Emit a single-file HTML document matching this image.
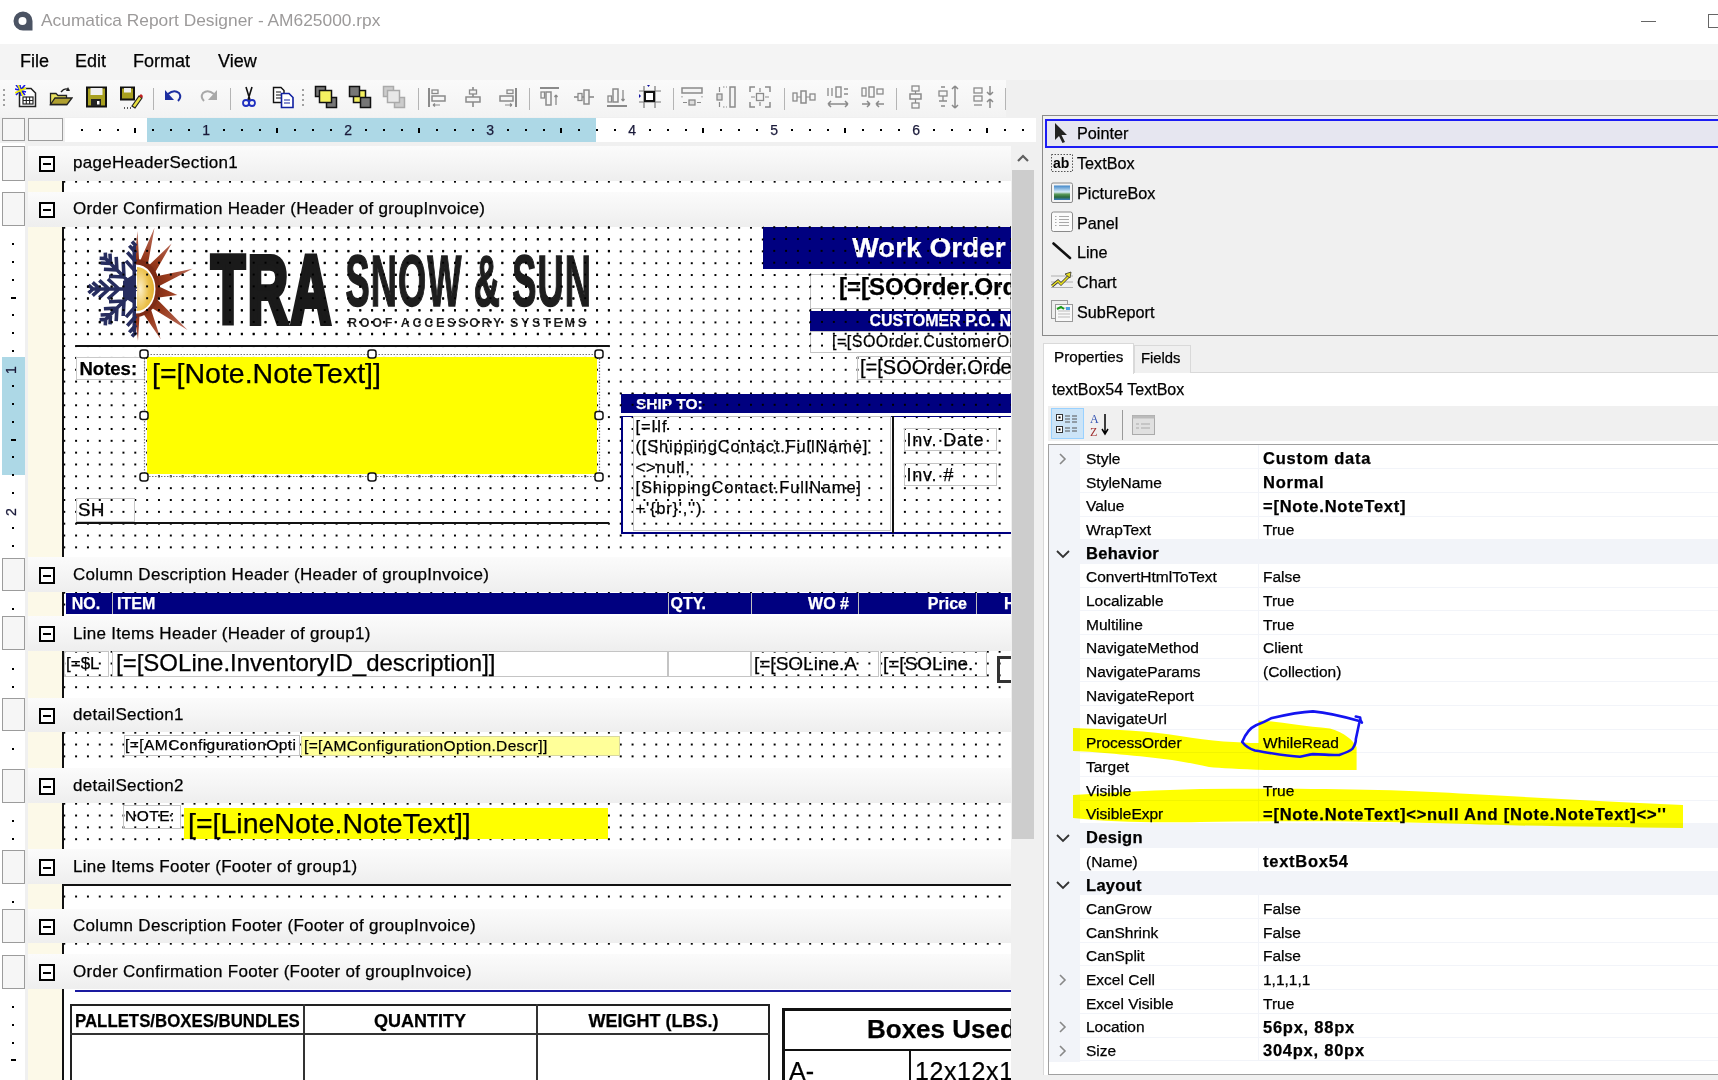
<!DOCTYPE html><html><head><meta charset="utf-8"><style>
*{margin:0;padding:0;box-sizing:border-box}
html,body{width:1718px;height:1080px;overflow:hidden;background:#f0f0f0;font-family:"Liberation Sans",sans-serif;color:#000}
div,svg{position:absolute}
.t{white-space:nowrap;line-height:1.15;-webkit-text-stroke:0.25px currentColor}
.b{font-weight:bold}
</style></head><body>
<div style="left:0px;top:0px;width:1718px;height:44px;background:#fff"></div><svg style="left:12px;top:10px" width="22" height="22" viewBox="0 0 22 22"><path d="M11 1.5A9.5 9.5 0 1 0 11 20.5H20.5V11A9.5 9.5 0 0 0 11 1.5Z" fill="#4b5363"/><circle cx="10.5" cy="11" r="4" fill="#fff"/></svg><div class="t" style="left:41px;top:11.32px;font-size:17.35px;color:#9c9a9a;-webkit-text-stroke:0">Acumatica Report Designer - AM625000.rpx</div><div style="left:1641px;top:20.8px;width:14.5px;height:1.3px;background:#666"></div><div style="left:1708px;top:13.7px;width:14px;height:14px;border:1.3px solid #666"></div><div style="left:0px;top:44px;width:1718px;height:36px;background:#f4f4f4"></div><div class="t" style="left:20px;top:50.65px;font-size:18px;">File</div><div class="t" style="left:75px;top:50.65px;font-size:18px;">Edit</div><div class="t" style="left:133px;top:50.65px;font-size:18px;">Format</div><div class="t" style="left:218px;top:50.65px;font-size:18px;">View</div><div style="left:0px;top:80px;width:1006px;height:37px;background:linear-gradient(#fafafa,#f3f3f3)"></div><div style="left:3px;top:89px;width:2px;height:2px;background:#a0a0a0"></div><div style="left:3px;top:94px;width:2px;height:2px;background:#a0a0a0"></div><div style="left:3px;top:99px;width:2px;height:2px;background:#a0a0a0"></div><div style="left:3px;top:104px;width:2px;height:2px;background:#a0a0a0"></div><div style="left:302px;top:89px;width:2px;height:2px;background:#a0a0a0"></div><div style="left:302px;top:94px;width:2px;height:2px;background:#a0a0a0"></div><div style="left:302px;top:99px;width:2px;height:2px;background:#a0a0a0"></div><div style="left:302px;top:104px;width:2px;height:2px;background:#a0a0a0"></div><div style="left:153px;top:88px;width:1.2px;height:22px;background:#b4b4b4"></div><div style="left:229.5px;top:88px;width:1.2px;height:22px;background:#b4b4b4"></div><div style="left:418px;top:88px;width:1.2px;height:22px;background:#b4b4b4"></div><div style="left:529px;top:88px;width:1.2px;height:22px;background:#b4b4b4"></div><div style="left:673px;top:88px;width:1.2px;height:22px;background:#b4b4b4"></div><div style="left:784px;top:88px;width:1.2px;height:22px;background:#b4b4b4"></div><div style="left:896px;top:88px;width:1.2px;height:22px;background:#b4b4b4"></div><div style="left:1005px;top:88px;width:1.2px;height:22px;background:#b4b4b4"></div><svg style="left:15px;top:85px" width="24" height="24" viewBox="0 0 24 24"><path d="M4.5 3.5H16L20.5 8V21.5H4.5Z" fill="#fff" stroke="#222" stroke-width="1.5"/><rect x="8" y="12" width="10" height="7" fill="#fff" stroke="#222" stroke-width="1.2"/><path d="M8 15.5H18M11.3 12V19M14.6 12V19" stroke="#222" stroke-width="1.1"/><path d="M0 4L11 7M5 0L6 11M1 0L10 10M10 0L1 10" stroke="#1818e0" stroke-width="1.6"/><path d="M0 8L11 3M3 0L8 11" stroke="#f0f000" stroke-width="1.6"/></svg><svg style="left:49px;top:85px" width="24" height="24" viewBox="0 0 24 24"><path d="M1.5 19.5V8.5H7L9 10.5H17.5V19.5Z" fill="#e8e060" stroke="#222" stroke-width="1.3"/><path d="M1.5 19.5L6 13H23L18 19.5Z" fill="#b0a030" stroke="#222" stroke-width="1.3"/><path d="M12 7Q16 2 20 5" stroke="#222" stroke-width="1.4" fill="none"/><path d="M19 2L21 6L17 6Z" fill="#222"/></svg><svg style="left:85px;top:85px" width="24" height="24" viewBox="0 0 24 24"><rect x="2" y="2.5" width="19" height="19" fill="#a8a020" stroke="#111" stroke-width="2"/><rect x="5.5" y="3" width="12" height="7" fill="#f0f0f0"/><rect x="6" y="14" width="10" height="7" fill="#222"/><rect x="12" y="16" width="2.5" height="3.5" fill="#fff"/></svg><svg style="left:119px;top:85px" width="24" height="24" viewBox="0 0 24 24"><rect x="2" y="2.5" width="13" height="12" fill="#a8a020" stroke="#111" stroke-width="2"/><rect x="5" y="3" width="7" height="4.5" fill="#f0f0f0"/><path d="M13 21L20 11L23 13L16 23Z" fill="#e8e040" stroke="#222" stroke-width="1.2"/><path d="M20 11L22 9L24 11L23 13" fill="#c02020"/><path d="M5 23H6M8 23H9M11 23H12" stroke="#222" stroke-width="1.5"/></svg><svg style="left:162px;top:85px" width="24" height="24" viewBox="0 0 24 24"><path d="M6 9Q12 4 17 8Q20 12 16 16" stroke="#1c2ea0" stroke-width="2" fill="none"/><path d="M3 5V15H12Z" fill="#1c2ea0"/></svg><svg style="left:196px;top:85px" width="24" height="24" viewBox="0 0 24 24"><path d="M18 9Q12 4 7 8Q4 12 8 16" stroke="#a8a8a8" stroke-width="2" fill="none"/><path d="M21 5V15H12Z" fill="#a8a8a8"/></svg><svg style="left:237px;top:85px" width="24" height="24" viewBox="0 0 24 24"><path d="M9 2L13 15M15 2L11 15" stroke="#111" stroke-width="1.6"/><circle cx="9" cy="18" r="3" fill="none" stroke="#2030c0" stroke-width="1.8"/><circle cx="15" cy="18" r="3" fill="none" stroke="#2030c0" stroke-width="1.8"/></svg><svg style="left:271px;top:85px" width="24" height="24" viewBox="0 0 24 24"><path d="M2.5 2.5H10L13 5.5V17.5H2.5Z" fill="#fff" stroke="#111" stroke-width="1.4"/><path d="M5 7H10M5 10H10M5 13H10" stroke="#111"/><path d="M10.5 8.5H18L22 12.5V22.5H10.5Z" fill="#fff" stroke="#1020a0" stroke-width="1.6"/><path d="M13 15H19M13 18H19" stroke="#1020a0" stroke-width="1.2"/></svg><svg style="left:314px;top:85px" width="24" height="24" viewBox="0 0 24 24"><rect x="1.5" y="1.5" width="10" height="10" fill="#777" stroke="#111" stroke-width="1.5"/><rect x="12.5" y="12.5" width="10" height="10" fill="#777" stroke="#111" stroke-width="1.5"/><rect x="5.5" y="5.5" width="12" height="12" fill="#f4f060" stroke="#111" stroke-width="1.5"/></svg><svg style="left:348px;top:85px" width="24" height="24" viewBox="0 0 24 24"><rect x="5.5" y="5.5" width="12" height="12" fill="#f4f060" stroke="#111" stroke-width="1.5"/><rect x="1.5" y="1.5" width="10" height="10" fill="#777" stroke="#111" stroke-width="1.5"/><rect x="12.5" y="12.5" width="10" height="10" fill="#777" stroke="#111" stroke-width="1.5"/></svg><svg style="left:382px;top:85px" width="24" height="24" viewBox="0 0 24 24"><rect x="1.5" y="1.5" width="10" height="10" fill="#ccc" stroke="#aaa" stroke-width="1.5"/><rect x="12.5" y="12.5" width="10" height="10" fill="#ccc" stroke="#aaa" stroke-width="1.5"/><rect x="5.5" y="5.5" width="12" height="12" fill="#e8e8e8" stroke="#aaa" stroke-width="1.5"/></svg><svg style="left:427px;top:85px" width="24" height="24" viewBox="0 0 24 24"><path d="M2 3V22" stroke="#8a8a8a" stroke-width="2"/><rect x="5" y="5" width="6" height="3.5" fill="none" stroke="#8a8a8a" stroke-width="1.3"/><rect x="5" y="11" width="13" height="5" fill="none" stroke="#8a8a8a" stroke-width="1.5"/><path d="M6 20H13M6 20L8 18.5M6 20L8 21.5" stroke="#8a8a8a" stroke-width="1.2"/></svg><svg style="left:461px;top:85px" width="24" height="24" viewBox="0 0 24 24"><path d="M12 2V22" stroke="#8a8a8a" stroke-width="1.6"/><rect x="8.5" y="5" width="7" height="4" fill="#f4f4f4" stroke="#8a8a8a" stroke-width="1.3"/><rect x="5" y="12" width="14" height="5" fill="#f4f4f4" stroke="#8a8a8a" stroke-width="1.5"/></svg><svg style="left:495px;top:85px" width="24" height="24" viewBox="0 0 24 24"><path d="M21 3V22" stroke="#8a8a8a" stroke-width="2"/><rect x="12" y="5" width="6" height="3.5" fill="none" stroke="#8a8a8a" stroke-width="1.3"/><rect x="5" y="11" width="13" height="5" fill="none" stroke="#8a8a8a" stroke-width="1.5"/><path d="M17 20H10M17 20L15 18.5M17 20L15 21.5" stroke="#8a8a8a" stroke-width="1.2"/></svg><svg style="left:538px;top:85px" width="24" height="24" viewBox="0 0 24 24"><path d="M2 3H21" stroke="#8a8a8a" stroke-width="2"/><rect x="3" y="7" width="3.5" height="6" fill="none" stroke="#8a8a8a" stroke-width="1.3"/><rect x="8" y="7" width="5" height="13" fill="none" stroke="#8a8a8a" stroke-width="1.5"/><path d="M18 20V10M18 10L16.5 12M18 10L19.5 12" stroke="#8a8a8a" stroke-width="1.3"/></svg><svg style="left:572px;top:85px" width="24" height="24" viewBox="0 0 24 24"><path d="M2 12H22" stroke="#8a8a8a" stroke-width="1.6"/><rect x="6" y="8.5" width="4" height="7" fill="#f4f4f4" stroke="#8a8a8a" stroke-width="1.3"/><rect x="12" y="5" width="5" height="14" fill="#f4f4f4" stroke="#8a8a8a" stroke-width="1.5"/></svg><svg style="left:605px;top:85px" width="24" height="24" viewBox="0 0 24 24"><path d="M2 21H22" stroke="#8a8a8a" stroke-width="2"/><rect x="3" y="11" width="3.5" height="6" fill="none" stroke="#8a8a8a" stroke-width="1.3"/><rect x="8" y="4" width="5" height="13" fill="none" stroke="#8a8a8a" stroke-width="1.5"/><path d="M18 5V16M18 16L16.5 14M18 16L19.5 14" stroke="#8a8a8a" stroke-width="1.3"/></svg><svg style="left:638px;top:85px" width="24" height="24" viewBox="0 0 24 24"><path d="M6 1V23M17 1V23M1 6H23M1 17H23" stroke="#777" stroke-width="1.2"/><rect x="7" y="7" width="9" height="9" fill="#fff" stroke="#111" stroke-width="2"/><path d="M9 0L12 0L10.5 2Z" fill="#1010a0"/><path d="M1 9L1 13L3 11Z" fill="#1010a0"/></svg><svg style="left:680px;top:85px" width="24" height="24" viewBox="0 0 24 24"><rect x="2" y="3" width="20" height="5" fill="#f4f4f4" stroke="#8a8a8a" stroke-width="1.5"/><path d="M2 11V14M22 11V14" stroke="#8a8a8a" stroke-dasharray="1.5 1.5"/><rect x="9" y="15" width="6" height="5" fill="#ddd" stroke="#8a8a8a" stroke-width="1.3"/><path d="M3 17.5H7M17 17.5H21" stroke="#8a8a8a" stroke-width="1.2"/></svg><svg style="left:714px;top:85px" width="24" height="24" viewBox="0 0 24 24"><rect x="16" y="2" width="5" height="20" fill="#f4f4f4" stroke="#8a8a8a" stroke-width="1.5"/><rect x="3" y="9" width="5" height="6" fill="#ddd" stroke="#8a8a8a" stroke-width="1.3"/><path d="M5.5 2V7M5.5 17V22" stroke="#8a8a8a" stroke-width="1.2"/><path d="M9 2H13M9 22H13" stroke="#8a8a8a" stroke-dasharray="1.5 1.5"/></svg><svg style="left:748px;top:85px" width="24" height="24" viewBox="0 0 24 24"><path d="M2 7V2H7M17 2H22V7M2 17V22H7M17 22H22V17" stroke="#8a8a8a" stroke-width="1.5" fill="none"/><rect x="8.5" y="8.5" width="7" height="7" fill="#f4f4f4" stroke="#8a8a8a" stroke-width="1.3"/><path d="M12 3V7M12 17V21M3 12H7M17 12H21" stroke="#8a8a8a" stroke-width="1.2"/></svg><svg style="left:792px;top:85px" width="24" height="24" viewBox="0 0 24 24"><rect x="1" y="8" width="4" height="8" fill="none" stroke="#8a8a8a" stroke-width="1.3"/><rect x="9" y="6" width="5" height="12" fill="none" stroke="#8a8a8a" stroke-width="1.5"/><rect x="18" y="9" width="5" height="6" fill="none" stroke="#8a8a8a" stroke-width="1.3"/><path d="M5 12H9M14 12H18" stroke="#8a8a8a" stroke-width="1.2"/></svg><svg style="left:826px;top:85px" width="24" height="24" viewBox="0 0 24 24"><path d="M2 3V11M6 3V11" stroke="#8a8a8a" stroke-width="1.3"/><rect x="10" y="2" width="5" height="10" fill="none" stroke="#8a8a8a" stroke-width="1.4"/><path d="M18 4H22M18 9H22" stroke="#8a8a8a" stroke-width="1.3"/><path d="M2 19H22M2 19L5 16M2 19L5 22M22 19L19 16M22 19L19 22" stroke="#8a8a8a" stroke-width="1.5" fill="none"/></svg><svg style="left:861px;top:85px" width="24" height="24" viewBox="0 0 24 24"><rect x="1" y="3" width="4" height="8" fill="none" stroke="#8a8a8a" stroke-width="1.3"/><rect x="8" y="2" width="5" height="10" fill="none" stroke="#8a8a8a" stroke-width="1.4"/><rect x="16" y="4" width="6" height="5" fill="none" stroke="#8a8a8a" stroke-width="1.3"/><path d="M1 19H9M9 19L6 16M9 19L6 22M23 19H15M15 19L18 16M15 19L18 22" stroke="#8a8a8a" stroke-width="1.5" fill="none"/></svg><svg style="left:904px;top:85px" width="24" height="24" viewBox="0 0 24 24"><rect x="8" y="1" width="7" height="5" fill="none" stroke="#8a8a8a" stroke-width="1.3"/><rect x="6" y="9" width="11" height="5" fill="none" stroke="#8a8a8a" stroke-width="1.5"/><rect x="8" y="18" width="7" height="5" fill="none" stroke="#8a8a8a" stroke-width="1.3"/><path d="M11.5 6V9M11.5 14V18" stroke="#8a8a8a" stroke-width="1.2"/></svg><svg style="left:937px;top:85px" width="24" height="24" viewBox="0 0 24 24"><rect x="2" y="6" width="8" height="5" fill="none" stroke="#8a8a8a" stroke-width="1.3"/><path d="M4 2H8M4 21H8M6 11V16M2 16H10" stroke="#8a8a8a" stroke-width="1.3"/><path d="M18 1V23M18 1L15 4M18 1L21 4M18 23L15 20M18 23L21 20" stroke="#8a8a8a" stroke-width="1.5" fill="none"/></svg><svg style="left:972px;top:85px" width="24" height="24" viewBox="0 0 24 24"><rect x="2" y="3" width="8" height="5" fill="none" stroke="#8a8a8a" stroke-width="1.3"/><rect x="2" y="11" width="8" height="5" fill="none" stroke="#8a8a8a" stroke-width="1.3"/><path d="M2 20H10" stroke="#8a8a8a" stroke-width="1.3"/><path d="M18 1V10M18 10L15 7M18 10L21 7M18 23V14M18 14L15 17M18 14L21 17" stroke="#8a8a8a" stroke-width="1.5" fill="none"/></svg><div style="left:1.7px;top:118px;width:23.2px;height:23px;border:1.4px solid #9c9c9c;background:#f6f6f6"></div><div style="left:28px;top:118px;width:35px;height:23px;border:1.4px solid #9c9c9c;background:#f6f6f6"></div><div style="left:65px;top:118px;width:971px;height:24px;background:#fff"></div><div style="left:146.5px;top:118px;width:449.5px;height:24px;background:#add8e6"></div><div style="left:81.0px;top:129px;width:2px;height:2px;background:#000"></div><div style="left:98.75px;top:129px;width:2px;height:2px;background:#000"></div><div style="left:116.5px;top:129px;width:2px;height:2px;background:#000"></div><div style="left:134.25px;top:127.5px;width:2px;height:5px;background:#000"></div><div style="left:152.0px;top:129px;width:2px;height:2px;background:#000"></div><div style="left:169.75px;top:129px;width:2px;height:2px;background:#000"></div><div style="left:187.5px;top:129px;width:2px;height:2px;background:#000"></div><div class="t" style="left:202.25px;top:121.95px;font-size:14px;color:#1a1a3a">1</div><div style="left:223.0px;top:129px;width:2px;height:2px;background:#000"></div><div style="left:240.75px;top:129px;width:2px;height:2px;background:#000"></div><div style="left:258.5px;top:129px;width:2px;height:2px;background:#000"></div><div style="left:276.25px;top:127.5px;width:2px;height:5px;background:#000"></div><div style="left:294.0px;top:129px;width:2px;height:2px;background:#000"></div><div style="left:311.75px;top:129px;width:2px;height:2px;background:#000"></div><div style="left:329.5px;top:129px;width:2px;height:2px;background:#000"></div><div class="t" style="left:344.25px;top:121.95px;font-size:14px;color:#1a1a3a">2</div><div style="left:365.0px;top:129px;width:2px;height:2px;background:#000"></div><div style="left:382.75px;top:129px;width:2px;height:2px;background:#000"></div><div style="left:400.5px;top:129px;width:2px;height:2px;background:#000"></div><div style="left:418.25px;top:127.5px;width:2px;height:5px;background:#000"></div><div style="left:436.0px;top:129px;width:2px;height:2px;background:#000"></div><div style="left:453.75px;top:129px;width:2px;height:2px;background:#000"></div><div style="left:471.5px;top:129px;width:2px;height:2px;background:#000"></div><div class="t" style="left:486.25px;top:121.95px;font-size:14px;color:#1a1a3a">3</div><div style="left:507.0px;top:129px;width:2px;height:2px;background:#000"></div><div style="left:524.75px;top:129px;width:2px;height:2px;background:#000"></div><div style="left:542.5px;top:129px;width:2px;height:2px;background:#000"></div><div style="left:560.25px;top:127.5px;width:2px;height:5px;background:#000"></div><div style="left:578.0px;top:129px;width:2px;height:2px;background:#000"></div><div style="left:595.75px;top:129px;width:2px;height:2px;background:#000"></div><div style="left:613.5px;top:129px;width:2px;height:2px;background:#000"></div><div class="t" style="left:628.25px;top:121.95px;font-size:14px;color:#1a1a3a">4</div><div style="left:649.0px;top:129px;width:2px;height:2px;background:#000"></div><div style="left:666.75px;top:129px;width:2px;height:2px;background:#000"></div><div style="left:684.5px;top:129px;width:2px;height:2px;background:#000"></div><div style="left:702.25px;top:127.5px;width:2px;height:5px;background:#000"></div><div style="left:720.0px;top:129px;width:2px;height:2px;background:#000"></div><div style="left:737.75px;top:129px;width:2px;height:2px;background:#000"></div><div style="left:755.5px;top:129px;width:2px;height:2px;background:#000"></div><div class="t" style="left:770.25px;top:121.95px;font-size:14px;color:#1a1a3a">5</div><div style="left:791.0px;top:129px;width:2px;height:2px;background:#000"></div><div style="left:808.75px;top:129px;width:2px;height:2px;background:#000"></div><div style="left:826.5px;top:129px;width:2px;height:2px;background:#000"></div><div style="left:844.25px;top:127.5px;width:2px;height:5px;background:#000"></div><div style="left:862.0px;top:129px;width:2px;height:2px;background:#000"></div><div style="left:879.75px;top:129px;width:2px;height:2px;background:#000"></div><div style="left:897.5px;top:129px;width:2px;height:2px;background:#000"></div><div class="t" style="left:912.25px;top:121.95px;font-size:14px;color:#1a1a3a">6</div><div style="left:933.0px;top:129px;width:2px;height:2px;background:#000"></div><div style="left:950.75px;top:129px;width:2px;height:2px;background:#000"></div><div style="left:968.5px;top:129px;width:2px;height:2px;background:#000"></div><div style="left:986.25px;top:127.5px;width:2px;height:5px;background:#000"></div><div style="left:1004.0px;top:129px;width:2px;height:2px;background:#000"></div><div style="left:1021.75px;top:129px;width:2px;height:2px;background:#000"></div><div style="left:0px;top:143px;width:25px;height:937px;background:#fff"></div><div style="left:1.5px;top:356.6px;width:23.5px;height:118.2px;background:#add8e6"></div><div style="left:28px;top:145.5px;width:983px;height:35.5px;background:linear-gradient(#fbfbfb,#f5f5f5 50%,#eeeeee)"></div><div style="left:1.7px;top:146.0px;width:23.2px;height:34.5px;border:1.4px solid #9c9c9c;background:#f6f6f6"></div><div style="left:38.5px;top:155.5px;width:16.5px;height:16.5px;border:2px solid #000;background:#fff"></div><div style="left:42.5px;top:163.0px;width:8.5px;height:2px;background:#000"></div><div class="t" style="left:73px;top:153.22px;font-size:17px;letter-spacing:0.29px">pageHeaderSection1</div><div style="left:28px;top:181px;width:34px;height:10.5px;background:#fcf9e8"></div><div style="left:62px;top:181px;width:949px;height:10.5px;background:#fff"></div><div style="left:62px;top:181px;width:2px;height:10.5px;background:#111"></div><div style="left:28px;top:191.5px;width:983px;height:35.0px;background:linear-gradient(#fbfbfb,#f5f5f5 50%,#eeeeee)"></div><div style="left:1.7px;top:192.0px;width:23.2px;height:34.0px;border:1.4px solid #9c9c9c;background:#f6f6f6"></div><div style="left:38.5px;top:201.5px;width:16.5px;height:16.5px;border:2px solid #000;background:#fff"></div><div style="left:42.5px;top:209.0px;width:8.5px;height:2px;background:#000"></div><div class="t" style="left:73px;top:199.22px;font-size:17px;letter-spacing:0.29px">Order Confirmation Header (Header of groupInvoice)</div><div style="left:28px;top:226.5px;width:34px;height:330.5px;background:#fcf9e8"></div><div style="left:62px;top:226.5px;width:949px;height:330.5px;background:#fff"></div><div style="left:62px;top:226.5px;width:2px;height:330.5px;background:#111"></div><div style="left:12px;top:243.25px;width:2px;height:2px;background:#000"></div><div style="left:12px;top:261.0px;width:2px;height:2px;background:#000"></div><div style="left:12px;top:278.75px;width:2px;height:2px;background:#000"></div><div style="left:11px;top:296.5px;width:5px;height:2px;background:#000"></div><div style="left:12px;top:314.25px;width:2px;height:2px;background:#000"></div><div style="left:12px;top:332.0px;width:2px;height:2px;background:#000"></div><div style="left:12px;top:349.75px;width:2px;height:2px;background:#000"></div><div class="t" style="left:7px;top:361.5px;font-size:14px;color:#1a1a3a;transform:rotate(-90deg)">1</div><div style="left:12px;top:385.25px;width:2px;height:2px;background:#000"></div><div style="left:12px;top:403.0px;width:2px;height:2px;background:#000"></div><div style="left:12px;top:420.75px;width:2px;height:2px;background:#000"></div><div style="left:11px;top:438.5px;width:5px;height:2px;background:#000"></div><div style="left:12px;top:456.25px;width:2px;height:2px;background:#000"></div><div style="left:12px;top:474.0px;width:2px;height:2px;background:#000"></div><div style="left:12px;top:491.75px;width:2px;height:2px;background:#000"></div><div class="t" style="left:7px;top:503.5px;font-size:14px;color:#1a1a3a;transform:rotate(-90deg)">2</div><div style="left:12px;top:527.25px;width:2px;height:2px;background:#000"></div><div style="left:12px;top:545.0px;width:2px;height:2px;background:#000"></div><div style="left:28px;top:557px;width:983px;height:34.7px;background:linear-gradient(#fbfbfb,#f5f5f5 50%,#eeeeee)"></div><div style="left:1.7px;top:557.5px;width:23.2px;height:33.7px;border:1.4px solid #9c9c9c;background:#f6f6f6"></div><div style="left:38.5px;top:567px;width:16.5px;height:16.5px;border:2px solid #000;background:#fff"></div><div style="left:42.5px;top:574.5px;width:8.5px;height:2px;background:#000"></div><div class="t" style="left:73px;top:564.73px;font-size:17px;letter-spacing:0.29px">Column Description Header (Header of groupInvoice)</div><div style="left:28px;top:591.7px;width:34px;height:24.1px;background:#fcf9e8"></div><div style="left:62px;top:591.7px;width:949px;height:24.1px;background:#fff"></div><div style="left:62px;top:591.7px;width:2px;height:24.1px;background:#111"></div><div style="left:12px;top:608.45px;width:2px;height:2px;background:#000"></div><div style="left:28px;top:615.8px;width:983px;height:35.2px;background:linear-gradient(#fbfbfb,#f5f5f5 50%,#eeeeee)"></div><div style="left:1.7px;top:616.3px;width:23.2px;height:34.2px;border:1.4px solid #9c9c9c;background:#f6f6f6"></div><div style="left:38.5px;top:625.8px;width:16.5px;height:16.5px;border:2px solid #000;background:#fff"></div><div style="left:42.5px;top:633.3px;width:8.5px;height:2px;background:#000"></div><div class="t" style="left:73px;top:623.52px;font-size:17px;letter-spacing:0.29px">Line Items Header (Header of group1)</div><div style="left:28px;top:651px;width:34px;height:46.5px;background:#fcf9e8"></div><div style="left:62px;top:651px;width:949px;height:46.5px;background:#fff"></div><div style="left:62px;top:651px;width:2px;height:46.5px;background:#111"></div><div style="left:12px;top:667.75px;width:2px;height:2px;background:#000"></div><div style="left:12px;top:685.5px;width:2px;height:2px;background:#000"></div><div style="left:28px;top:697.5px;width:983px;height:34.2px;background:linear-gradient(#fbfbfb,#f5f5f5 50%,#eeeeee)"></div><div style="left:1.7px;top:698.0px;width:23.2px;height:33.2px;border:1.4px solid #9c9c9c;background:#f6f6f6"></div><div style="left:38.5px;top:707.5px;width:16.5px;height:16.5px;border:2px solid #000;background:#fff"></div><div style="left:42.5px;top:715.0px;width:8.5px;height:2px;background:#000"></div><div class="t" style="left:73px;top:705.23px;font-size:17px;letter-spacing:0.29px">detailSection1</div><div style="left:28px;top:731.7px;width:34px;height:36.3px;background:#fcf9e8"></div><div style="left:62px;top:731.7px;width:949px;height:36.3px;background:#fff"></div><div style="left:62px;top:731.7px;width:2px;height:36.3px;background:#111"></div><div style="left:12px;top:748.45px;width:2px;height:2px;background:#000"></div><div style="left:28px;top:768px;width:983px;height:35px;background:linear-gradient(#fbfbfb,#f5f5f5 50%,#eeeeee)"></div><div style="left:1.7px;top:768.5px;width:23.2px;height:34px;border:1.4px solid #9c9c9c;background:#f6f6f6"></div><div style="left:38.5px;top:778px;width:16.5px;height:16.5px;border:2px solid #000;background:#fff"></div><div style="left:42.5px;top:785.5px;width:8.5px;height:2px;background:#000"></div><div class="t" style="left:73px;top:775.73px;font-size:17px;letter-spacing:0.29px">detailSection2</div><div style="left:28px;top:803px;width:34px;height:46px;background:#fcf9e8"></div><div style="left:62px;top:803px;width:949px;height:46px;background:#fff"></div><div style="left:62px;top:803px;width:2px;height:46px;background:#111"></div><div style="left:12px;top:819.75px;width:2px;height:2px;background:#000"></div><div style="left:12px;top:837.5px;width:2px;height:2px;background:#000"></div><div style="left:28px;top:849px;width:983px;height:35px;background:linear-gradient(#fbfbfb,#f5f5f5 50%,#eeeeee)"></div><div style="left:1.7px;top:849.5px;width:23.2px;height:34px;border:1.4px solid #9c9c9c;background:#f6f6f6"></div><div style="left:38.5px;top:859px;width:16.5px;height:16.5px;border:2px solid #000;background:#fff"></div><div style="left:42.5px;top:866.5px;width:8.5px;height:2px;background:#000"></div><div class="t" style="left:73px;top:856.73px;font-size:17px;letter-spacing:0.29px">Line Items Footer (Footer of group1)</div><div style="left:28px;top:884px;width:34px;height:24.5px;background:#fcf9e8"></div><div style="left:62px;top:884px;width:949px;height:24.5px;background:#fff"></div><div style="left:62px;top:884px;width:2px;height:24.5px;background:#111"></div><div style="left:12px;top:900.75px;width:2px;height:2px;background:#000"></div><div style="left:28px;top:908.5px;width:983px;height:34.8px;background:linear-gradient(#fbfbfb,#f5f5f5 50%,#eeeeee)"></div><div style="left:1.7px;top:909.0px;width:23.2px;height:33.8px;border:1.4px solid #9c9c9c;background:#f6f6f6"></div><div style="left:38.5px;top:918.5px;width:16.5px;height:16.5px;border:2px solid #000;background:#fff"></div><div style="left:42.5px;top:926.0px;width:8.5px;height:2px;background:#000"></div><div class="t" style="left:73px;top:916.23px;font-size:17px;letter-spacing:0.29px">Column Description Footer (Footer of groupInvoice)</div><div style="left:28px;top:943.3px;width:34px;height:11.1px;background:#fcf9e8"></div><div style="left:62px;top:943.3px;width:949px;height:11.1px;background:#fff"></div><div style="left:62px;top:943.3px;width:2px;height:11.1px;background:#111"></div><div style="left:28px;top:954.4px;width:983px;height:34.9px;background:linear-gradient(#fbfbfb,#f5f5f5 50%,#eeeeee)"></div><div style="left:1.7px;top:954.9px;width:23.2px;height:33.9px;border:1.4px solid #9c9c9c;background:#f6f6f6"></div><div style="left:38.5px;top:964.4px;width:16.5px;height:16.5px;border:2px solid #000;background:#fff"></div><div style="left:42.5px;top:971.9px;width:8.5px;height:2px;background:#000"></div><div class="t" style="left:73px;top:962.12px;font-size:17px;letter-spacing:0.29px">Order Confirmation Footer (Footer of groupInvoice)</div><div style="left:28px;top:989.3px;width:34px;height:90.7px;background:#fcf9e8"></div><div style="left:62px;top:989.3px;width:949px;height:90.7px;background:#fff"></div><div style="left:62px;top:989.3px;width:2px;height:90.7px;background:#111"></div><div style="left:12px;top:1006.05px;width:2px;height:2px;background:#000"></div><div style="left:12px;top:1023.8px;width:2px;height:2px;background:#000"></div><div style="left:12px;top:1041.55px;width:2px;height:2px;background:#000"></div><div style="left:11px;top:1059.3px;width:5px;height:2px;background:#000"></div><svg style="left:64px;top:181px" width="945.5" height="9.3"><defs><pattern id="gd0" x="11.1" y="-0.3" width="11.84" height="11.84" patternUnits="userSpaceOnUse"><rect width="1.8" height="1.8" fill="#000" shape-rendering="crispEdges"/></pattern></defs><rect width="947" height="10.5" fill="url(#gd0)"/></svg><svg style="left:64px;top:226.5px" width="945.5" height="329.3"><defs><pattern id="gd1" x="11.1" y="-0.3" width="11.84" height="11.84" patternUnits="userSpaceOnUse"><rect width="1.8" height="1.8" fill="#000" shape-rendering="crispEdges"/></pattern></defs><rect width="947" height="330.5" fill="url(#gd1)"/></svg><svg style="left:64px;top:591.7px" width="945.5" height="22.9"><defs><pattern id="gd2" x="11.1" y="-0.3" width="11.84" height="11.84" patternUnits="userSpaceOnUse"><rect width="1.8" height="1.8" fill="#000" shape-rendering="crispEdges"/></pattern></defs><rect width="947" height="24.1" fill="url(#gd2)"/></svg><svg style="left:64px;top:651px" width="945.5" height="45.3"><defs><pattern id="gd3" x="11.1" y="-0.3" width="11.84" height="11.84" patternUnits="userSpaceOnUse"><rect width="1.8" height="1.8" fill="#000" shape-rendering="crispEdges"/></pattern></defs><rect width="947" height="46.5" fill="url(#gd3)"/></svg><svg style="left:64px;top:731.7px" width="945.5" height="35.1"><defs><pattern id="gd4" x="11.1" y="-0.3" width="11.84" height="11.84" patternUnits="userSpaceOnUse"><rect width="1.8" height="1.8" fill="#000" shape-rendering="crispEdges"/></pattern></defs><rect width="947" height="36.3" fill="url(#gd4)"/></svg><svg style="left:64px;top:803px" width="945.5" height="44.8"><defs><pattern id="gd5" x="11.1" y="-0.3" width="11.84" height="11.84" patternUnits="userSpaceOnUse"><rect width="1.8" height="1.8" fill="#000" shape-rendering="crispEdges"/></pattern></defs><rect width="947" height="46" fill="url(#gd5)"/></svg><svg style="left:64px;top:884px" width="945.5" height="23.3"><defs><pattern id="gd6" x="11.1" y="-0.3" width="11.84" height="11.84" patternUnits="userSpaceOnUse"><rect width="1.8" height="1.8" fill="#000" shape-rendering="crispEdges"/></pattern></defs><rect width="947" height="24.5" fill="url(#gd6)"/></svg><svg style="left:64px;top:943.3px" width="945.5" height="9.9"><defs><pattern id="gd7" x="11.1" y="-0.3" width="11.84" height="11.84" patternUnits="userSpaceOnUse"><rect width="1.8" height="1.8" fill="#000" shape-rendering="crispEdges"/></pattern></defs><rect width="947" height="11.1" fill="url(#gd7)"/></svg><div style="left:763.4px;top:227px;width:248px;height:42px;background:#000080"></div><div class="t b" style="left:700px;top:232px;width:305.7px;text-align:right;font-size:28px;color:#fff">Work Order</div><div style="left:810px;top:273.5px;width:201px;height:35px;border:1px solid #c4c4c4;background:#fff;"></div><div class="t" style="left:839px;top:273.2px;font-size:24px;font-weight:bold">[=[SOOrder.Ord</div><div style="left:810px;top:310.5px;width:201px;height:21px;background:#000080"></div><div class="t" style="left:869.5px;top:311.8px;font-size:16px;font-weight:bold;color:#fff">CUSTOMER P.O. N</div><div style="left:810px;top:331px;width:201px;height:22px;border:1px solid #c4c4c4;background:#fff;"></div><div class="t" style="left:832px;top:333.3px;font-size:16px;letter-spacing:0.5px">[=[SOOrder.CustomerOr</div><div style="left:857px;top:356px;width:154px;height:24px;border:1px solid #c4c4c4;background:transparent;"></div><div class="t" style="left:860px;top:356.0px;font-size:20px;">[=[SOOrder.Order</div><div style="left:75.7px;top:344.8px;width:533.5px;height:2px;background:#111"></div><div style="left:76px;top:521.5px;width:533px;height:2px;background:#111"></div><div style="left:76px;top:357px;width:69px;height:22.5px;border:1px solid #c8c8c8;background:#fff;"></div><div class="t" style="left:79.5px;top:358.36px;font-size:18.5px;font-weight:bold">Notes:</div><div style="left:147.3px;top:357px;width:450px;height:117px;background:#ffff00"></div><div class="t" style="left:152px;top:357.11px;font-size:28.5px;">[=[Note.NoteText]]</div><div style="left:76px;top:498px;width:59px;height:23.5px;border:1px solid #c8c8c8;background:transparent;"></div><div class="t" style="left:78px;top:499.07px;font-size:19px;">SH</div><div style="left:621px;top:394px;width:390px;height:18.6px;background:#000080"></div><div class="t" style="left:636px;top:394.59px;font-size:15.5px;font-weight:bold;color:#fff">SHIP TO:</div><div style="left:621px;top:415.5px;width:390px;height:118px;border-left:2px solid #000080;border-bottom:2px solid #000080;border-top:1px solid #000080"></div><div style="left:632.6px;top:416px;width:258.4px;height:115px;border:1px solid #c4c4c4;background:transparent;"></div><div style="left:892px;top:416px;width:2px;height:117px;background:#111"></div><div class="t" style="left:635.5px;top:416.51px;font-size:16.5px;letter-spacing:0.8px">[=IIf</div><div class="t" style="left:635.5px;top:437.01px;font-size:16.5px;letter-spacing:0.8px">([ShippingContact.FullName]</div><div class="t" style="left:635.5px;top:457.51px;font-size:16.5px;letter-spacing:0.8px">&lt;&gt;null,</div><div class="t" style="left:635.5px;top:478.01px;font-size:16.5px;letter-spacing:0.8px">[ShippingContact.FullName]</div><div class="t" style="left:635.5px;top:498.51px;font-size:16.5px;letter-spacing:0.8px">+'{br}','')</div><div style="left:904px;top:428px;width:93px;height:22.5px;border:1px solid #c4c4c4;background:transparent;"></div><div class="t" style="left:906.5px;top:429.65px;font-size:18px;letter-spacing:0.8px">Inv. Date</div><div style="left:904px;top:463px;width:93px;height:22.5px;border:1px solid #c4c4c4;background:transparent;"></div><div class="t" style="left:906.5px;top:464.65px;font-size:18px;letter-spacing:0.8px">Inv. #</div><div style="left:66px;top:592.7px;width:945px;height:21.5px;background:#000080"></div><div style="left:111.8px;top:592.7px;width:1.2px;height:21.5px;background:#c0c0c0"></div><div style="left:668px;top:592.7px;width:1.2px;height:21.5px;background:#c0c0c0"></div><div style="left:750.8px;top:592.7px;width:1.2px;height:21.5px;background:#c0c0c0"></div><div style="left:857.8px;top:592.7px;width:1.2px;height:21.5px;background:#c0c0c0"></div><div style="left:976px;top:592.7px;width:1.2px;height:21.5px;background:#c0c0c0"></div><div class="t" style="left:71.8px;top:595.3px;font-size:16px;font-weight:bold;color:#fff">NO.</div><div class="t" style="left:117px;top:595.3px;font-size:16px;font-weight:bold;color:#fff">ITEM</div><div class="t" style="left:670.5px;top:595.3px;font-size:16px;font-weight:bold;color:#fff">QTY.</div><div class="t b" style="left:760px;top:595.3px;width:89px;text-align:right;font-size:16px;color:#fff">WO #</div><div class="t b" style="left:880px;top:595.3px;width:87px;text-align:right;font-size:16px;color:#fff">Price</div><div class="t" style="left:1004px;top:595.3px;font-size:16px;font-weight:bold;color:#fff">H</div><div style="left:64px;top:651.4px;width:44.5px;height:25.6px;border:1px solid #c4c4c4;background:transparent;"></div><div class="t" style="left:66px;top:653.73px;font-size:17px;">[=$L</div><div style="left:112px;top:651px;width:556px;height:26px;border:1px solid #c4c4c4;background:#fff;"></div><div class="t" style="left:116px;top:648.7px;font-size:24px;">[=[SOLine.InventoryID_description]]</div><div style="left:668px;top:651px;width:82.8px;height:26px;border:1px solid #c4c4c4;background:#fff;"></div><div style="left:751px;top:651px;width:128px;height:26px;border:1px solid #c4c4c4;background:transparent;"></div><div class="t" style="left:754px;top:652.58px;font-size:19px;">[=[SOLine.A</div><div style="left:880px;top:651px;width:107px;height:26px;border:1px solid #c4c4c4;background:transparent;"></div><div class="t" style="left:883px;top:652.58px;font-size:19px;">[=[SOLine.</div><div style="left:997px;top:656px;width:20px;height:27px;border:3px solid #333;border-right:none"></div><div style="left:124px;top:734.5px;width:176px;height:21px;border:1px solid #c4c4c4;background:transparent;"></div><div class="t" style="left:125px;top:736.09px;font-size:15.5px;letter-spacing:0.45px">[=[AMConfigurationOpti</div><div style="left:300.5px;top:736px;width:319px;height:20px;border:1px solid #d8d8a0;background:#ffff99;"></div><div class="t" style="left:304px;top:737.09px;font-size:15.5px;letter-spacing:0.36px">[=[AMConfigurationOption.Descr]]</div><div style="left:123px;top:805px;width:58px;height:24px;border:1px solid #c4c4c4;background:transparent;"></div><div class="t" style="left:125px;top:807.09px;font-size:15.5px;letter-spacing:0.5px">NOTE:</div><div style="left:183.5px;top:808px;width:424px;height:30.5px;background:#ffff00"></div><div class="t" style="left:188px;top:807.11px;font-size:28.5px;">[=[LineNote.NoteText]]</div><div style="left:62px;top:884.3px;width:949px;height:2px;background:#111"></div><div style="left:75.4px;top:989.5px;width:936px;height:2px;background:#1a1aa0"></div><div style="left:70px;top:1004px;width:700px;height:90px;border:2px solid #222;background:#fff"></div><div style="left:70px;top:1033px;width:700px;height:1.5px;background:#333"></div><div style="left:303px;top:1004px;width:1.5px;height:80px;background:#333"></div><div style="left:536px;top:1004px;width:1.5px;height:80px;background:#333"></div><div class="t" style="left:75px;top:1010.65px;font-size:18px;font-weight:bold;transform:scaleX(0.934);transform-origin:0 0">PALLETS/BOXES/BUNDLES</div><div class="t b" style="left:304px;top:1010.65px;width:232px;text-align:center;font-size:18px">QUANTITY</div><div class="t b" style="left:537px;top:1010.65px;width:233px;text-align:center;font-size:18px">WEIGHT (LBS.)</div><div style="left:782px;top:1007.5px;width:240px;height:90px;border:3px solid #111;background:#fff"></div><div style="left:782px;top:1048.5px;width:240px;height:2.5px;background:#111"></div><div style="left:909px;top:1050px;width:2px;height:40px;background:#111"></div><div class="t" style="left:867px;top:1015.05px;font-size:26px;font-weight:bold">Boxes Used</div><div class="t" style="left:789px;top:1056.62px;font-size:25px;">A-</div><div class="t" style="left:915px;top:1056.62px;font-size:25px;letter-spacing:0.6px">12x12x12</div><svg style="left:0;top:0" width="620" height="360" viewBox="0 0 620 360"><defs><radialGradient id="sung" cx="0.2" cy="0.5" r="0.85"><stop offset="0" stop-color="#fcefc8"/><stop offset="0.55" stop-color="#ecc24e"/><stop offset="1" stop-color="#deaa2a"/></radialGradient><radialGradient id="rayg" gradientUnits="userSpaceOnUse" cx="136" cy="289" r="60"><stop offset="0.3" stop-color="#7a2a14"/><stop offset="0.55" stop-color="#983a1c"/><stop offset="1" stop-color="#b86a58"/></radialGradient></defs><path d="M133.8 266.1L137.5 231.0L139.4 266.3ZM137.9 266.1L154.5 227.7L147.1 268.8ZM145.8 268.2L171.6 243.6L153.9 274.6ZM155.3 276.6L192.6 268.7L158.8 286.3ZM158.9 286.6L177.3 294.9L157.3 297.7ZM156.8 298.9L187.5 330.0L150.3 307.0ZM150.2 307.1L160.7 339.3L141.6 311.3ZM139.7 311.7L138.0 341.0L134.1 311.9Z" fill="url(#rayg)"/><path d="M136 259A23 28 0 0 1 136 317Z" fill="#7e2c16"/><path d="M136 264.5A19.5 24.5 0 0 1 136 313.5Z" fill="#fff"/><path d="M137 267A17 22 0 0 1 137 311Z" fill="url(#sung)"/><path d="M136.0 289.0L103.5 256.5M124.0 277.0L123.2 262.0M124.0 277.0L109.0 276.2M116.9 269.9L116.2 256.9M116.9 269.9L103.9 269.2M110.5 263.5L110.0 253.6M110.5 263.5L100.6 263.0M105.6 258.6L105.3 252.6M105.6 258.6L99.6 258.3M136.0 289.0L90.0 289.0M119.0 289.0L107.9 279.0M119.0 289.0L107.9 299.0M109.0 289.0L99.3 280.3M109.0 289.0L99.3 297.7M100.0 289.0L92.6 282.3M100.0 289.0L92.6 295.7M93.0 289.0L88.5 285.0M93.0 289.0L88.5 293.0M136.0 289.0L103.5 321.5M124.0 301.0L109.0 301.8M124.0 301.0L123.2 316.0M116.9 308.1L103.9 308.8M116.9 308.1L116.2 321.1M110.5 314.5L100.6 315.0M110.5 314.5L110.0 324.4M105.6 319.4L99.6 319.7M105.6 319.4L105.3 325.4M136.0 272.0L126.0 260.9M136.0 262.0L127.3 252.3M136.0 253.0L129.3 245.6M136.0 246.0L132.0 241.5M136.0 306.0L126.0 317.1M136.0 316.0L127.3 325.7M136.0 325.0L129.3 332.4M136.0 332.0L132.0 336.5" stroke="#272d5f" stroke-width="3.6" fill="none" stroke-linecap="butt"/><rect x="132.5" y="246" width="3.5" height="86" fill="#272d5f"/><path d="M136 273L123 281L123 297L136 305Z" fill="#272d5f"/><text x="0" y="0" transform="translate(211 323) scale(0.585 1)" letter-spacing="4.5" font-family="Liberation Sans" font-weight="bold" font-size="95.5" fill="#1a1a1a" stroke="#1a1a1a" stroke-width="6" stroke-linejoin="miter">TRA</text><text x="0" y="0" transform="translate(345.5 306) scale(0.5 1)" letter-spacing="2.2" font-family="Liberation Sans" font-weight="bold" font-size="72.5" fill="#1e1e1e" stroke="#1e1e1e" stroke-width="1.6">SNOW &amp; SUN</text><text x="348" y="327" font-family="Liberation Sans" font-weight="bold" font-size="12.5" fill="#222" textLength="238" lengthAdjust="spacing">ROOF ACCESSORY SYSTEMS</text></svg><svg style="left:0;top:0" width="620" height="490" viewBox="0 0 620 490"><rect x="144.5" y="354.5" width="455" height="122" fill="none" stroke="#777" stroke-width="1.2" stroke-dasharray="1.5 1.5"/><rect x="140" y="350" width="8" height="8" rx="2.5" fill="#fff" stroke="#111" stroke-width="1.5"/><rect x="140" y="411.5" width="8" height="8" rx="2.5" fill="#fff" stroke="#111" stroke-width="1.5"/><rect x="140" y="473" width="8" height="8" rx="2.5" fill="#fff" stroke="#111" stroke-width="1.5"/><rect x="368" y="350" width="8" height="8" rx="2.5" fill="#fff" stroke="#111" stroke-width="1.5"/><rect x="368" y="473" width="8" height="8" rx="2.5" fill="#fff" stroke="#111" stroke-width="1.5"/><rect x="595" y="350" width="8" height="8" rx="2.5" fill="#fff" stroke="#111" stroke-width="1.5"/><rect x="595" y="411.5" width="8" height="8" rx="2.5" fill="#fff" stroke="#111" stroke-width="1.5"/><rect x="595" y="473" width="8" height="8" rx="2.5" fill="#fff" stroke="#111" stroke-width="1.5"/></svg><svg style="left:763.4px;top:226px" width="248" height="43"><defs><pattern id="ov1" x="10.26" y="0.2" width="11.84" height="11.84" patternUnits="userSpaceOnUse"><rect width="1.8" height="1.8" fill="#000" shape-rendering="crispEdges"/></pattern></defs><rect width="248" height="43" fill="url(#ov1)"/></svg><svg style="left:810px;top:273px" width="201" height="80.5"><defs><pattern id="ov2" x="11.02" y="0.56" width="11.84" height="11.84" patternUnits="userSpaceOnUse"><rect width="1.8" height="1.8" fill="#000" shape-rendering="crispEdges"/></pattern></defs><rect width="201" height="80.5" fill="url(#ov2)"/></svg><svg style="left:621px;top:393px" width="390" height="20"><defs><pattern id="ov3" x="10.58" y="10.8" width="11.84" height="11.84" patternUnits="userSpaceOnUse"><rect width="1.8" height="1.8" fill="#000" shape-rendering="crispEdges"/></pattern></defs><rect width="390" height="20" fill="url(#ov3)"/></svg><svg style="left:80px;top:226px" width="530" height="118"><defs><pattern id="ov4" x="6.94" y="0.2" width="11.84" height="11.84" patternUnits="userSpaceOnUse"><rect width="1.8" height="1.8" fill="#000" shape-rendering="crispEdges"/></pattern></defs><rect width="530" height="118" fill="url(#ov4)"/></svg><div style="left:1011px;top:143px;width:24px;height:937px;background:#f0f0f0"></div><svg style="left:1015px;top:151px" width="16" height="14" viewBox="0 0 16 14"><path d="M3 10L8 5L13 10" stroke="#606060" stroke-width="2.2" fill="none"/></svg><div style="left:1012px;top:170px;width:22px;height:669px;background:#cdcdcd"></div><div style="left:1042px;top:115px;width:680px;height:221px;border:1px solid #8a8a8a;border-right:none;background:#f0f0f0"></div><div style="left:1045px;top:118.5px;width:680px;height:29.5px;border:2px solid #1c1cf5;border-right:none;background:#e6e6f0"></div><div class="t" style="left:1077px;top:124.49px;font-size:16.2px;">Pointer</div><div class="t" style="left:1077px;top:154.49px;font-size:16.2px;">TextBox</div><div class="t" style="left:1077px;top:184.49px;font-size:16.2px;">PictureBox</div><div class="t" style="left:1077px;top:213.99px;font-size:16.2px;">Panel</div><div class="t" style="left:1077px;top:243.49px;font-size:16.2px;">Line</div><div class="t" style="left:1077px;top:273.49px;font-size:16.2px;">Chart</div><div class="t" style="left:1077px;top:302.99px;font-size:16.2px;">SubReport</div><svg style="left:1050px;top:121px" width="24" height="24" viewBox="0 0 24 24"><path d="M5 2L5 19L9 15L12.5 22L15 21L11.5 14L17 14Z" fill="#222"/></svg><svg style="left:1050px;top:151px" width="24" height="24" viewBox="0 0 24 24"><rect x="1.5" y="3.5" width="21" height="17" fill="none" stroke="#555" stroke-dasharray="1.5 1.5"/><text x="3" y="17" font-family="Liberation Sans" font-weight="bold" font-size="14" fill="#000">ab</text></svg><svg style="left:1050px;top:181px" width="24" height="24" viewBox="0 0 24 24"><defs><linearGradient id="pbg" x1="0" y1="0" x2="0" y2="1"><stop offset="0" stop-color="#3f86c8"/><stop offset="0.45" stop-color="#d8ecf8"/><stop offset="0.6" stop-color="#5a9a5a"/><stop offset="0.8" stop-color="#2a6a3a"/><stop offset="1" stop-color="#3a7ac0"/></linearGradient></defs><rect x="1.5" y="2" width="21" height="19.5" rx="1.5" fill="#f4f4f4" stroke="#8a8a8a"/><rect x="4" y="4.5" width="16" height="14.5" fill="url(#pbg)"/></svg><svg style="left:1050px;top:210px" width="24" height="24" viewBox="0 0 24 24"><rect x="1.5" y="2" width="21" height="19.5" rx="2" fill="#fafafa" stroke="#8a8a8a"/><path d="M5 6.5H6.5M5 9.5H6.5M5 12.5H6.5M5 15.5H6.5M9 6.5H19M9 9.5H19M9 12.5H19M9 15.5H19" stroke="#a8a8a8" stroke-width="1.2"/></svg><svg style="left:1050px;top:240px" width="24" height="24" viewBox="0 0 24 24"><path d="M3.5 3.5L20 18" stroke="#111" stroke-width="2.6" stroke-linecap="round"/></svg><svg style="left:1050px;top:270px" width="24" height="24" viewBox="0 0 24 24"><path d="M1 6H23M1 12H23M1 17.5H23" stroke="#b0b0b0" stroke-width="1.2"/><path d="M2 16L8 11L11 14L19 6" stroke="#333" stroke-width="3" fill="none"/><path d="M2 16L8 11L11 14L19 6" stroke="#e8e020" stroke-width="1.6" fill="none"/><path d="M15 4L21 2L20 8Z" fill="#e8e020" stroke="#333" stroke-width="0.8"/></svg><svg style="left:1050px;top:299px" width="24" height="24" viewBox="0 0 24 24"><rect x="1.5" y="1.5" width="16" height="18" fill="#eee" stroke="#999"/><rect x="5.5" y="5.5" width="17" height="17" fill="#f8f8f8" stroke="#999"/><path d="M8 9H20M8 12H20M8 15H20M8 18H20" stroke="#bbb"/><path d="M7 10L11 8L14 10" stroke="#1a9a1a" stroke-width="2" fill="none"/><rect x="16" y="8" width="4" height="3" fill="#4aa0e0"/></svg><div style="left:1043px;top:372px;width:680px;height:708px;background:#fff;border-left:1px solid #d9d9d9;border-top:1px solid #d9d9d9"></div><div style="left:1134px;top:345px;width:57px;height:28px;background:#f0f0f0;border:1px solid #d9d9d9;border-bottom:none"></div><div style="left:1043px;top:342.5px;width:91px;height:31px;background:#fff;border:1px solid #d9d9d9;border-bottom:none"></div><div class="t" style="left:1054px;top:348.26px;font-size:15.2px;">Properties</div><div class="t" style="left:1141px;top:350.49px;font-size:14.8px;">Fields</div><div class="t" style="left:1052px;top:380.8px;font-size:16px;">textBox54 TextBox</div><div style="left:1048px;top:406px;width:680px;height:35px;background:#f0f0f0"></div><div style="left:1051px;top:408px;width:33px;height:31px;background:#cce4f7;border:1px solid #99d1ff"></div><svg style="left:1054px;top:411px" width="26" height="26" viewBox="0 0 26 26"><rect x="2.5" y="3.5" width="6" height="6" fill="#fff" stroke="#333"/><rect x="4.5" y="5.5" width="2" height="2" fill="#000"/><rect x="2.5" y="15.5" width="6" height="6" fill="#fff" stroke="#333"/><rect x="4.5" y="17.5" width="2" height="2" fill="#000"/><path d="M11 5H16M18 5H23M11 8H16M18 8H23M11 11H16M18 11H23M11 17H16M18 17H23M11 20H16M18 20H23" stroke="#555" stroke-width="1"/></svg><svg style="left:1088px;top:411px" width="28" height="28" viewBox="0 0 28 28"><text x="2" y="12" font-family="Liberation Serif" font-size="12" fill="#3050b0">A</text><text x="2" y="25" font-family="Liberation Serif" font-size="12" fill="#a03030">Z</text><path d="M17 3V22M14 18L17 23L20 18" stroke="#000" stroke-width="1.5" fill="none"/></svg><div style="left:1121.5px;top:410px;width:1.5px;height:30px;background:#9a9a9a"></div><svg style="left:1131px;top:412px" width="26" height="26" viewBox="0 0 26 26"><rect x="1.5" y="3.5" width="22" height="19" fill="#e0e0e0" stroke="#aaa"/><rect x="1.5" y="3.5" width="22" height="3" fill="#bbb"/><path d="M5 12H8M10 12H19M5 16H8M10 16H19" stroke="#aaa"/></svg><div style="left:1048px;top:444px;width:680px;height:631px;background:#fff;border:1px solid #a0a0a0;border-right:none"></div><div style="left:1043px;top:1075px;width:680px;height:5px;background:#f0f0f0"></div><div style="left:1049px;top:445px;width:31px;height:616.68px;background:#f2f4f9"></div><div style="left:1080px;top:468.18px;width:640px;height:1px;background:#f2f4f9"></div><div style="left:1257.5px;top:445.0px;width:1px;height:23.68px;background:#f2f4f9"></div><div class="t" style="left:1086px;top:449.99px;font-size:15.5px;">Style</div><div class="t" style="left:1263px;top:449.41px;font-size:16.5px;font-weight:bold;letter-spacing:0.75px">Custom data</div><svg style="left:1057px;top:451.9px" width="12" height="14" viewBox="0 0 12 14"><path d="M3 2L8 7L3 12" stroke="#888" stroke-width="1.6" fill="none"/></svg><div style="left:1080px;top:491.86px;width:640px;height:1px;background:#f2f4f9"></div><div style="left:1257.5px;top:468.68px;width:1px;height:23.68px;background:#f2f4f9"></div><div class="t" style="left:1086px;top:473.67px;font-size:15.5px;">StyleName</div><div class="t" style="left:1263px;top:473.09px;font-size:16.5px;font-weight:bold;letter-spacing:0.75px">Normal</div><div style="left:1080px;top:515.54px;width:640px;height:1px;background:#f2f4f9"></div><div style="left:1257.5px;top:492.36px;width:1px;height:23.68px;background:#f2f4f9"></div><div class="t" style="left:1086px;top:497.35px;font-size:15.5px;">Value</div><div class="t" style="left:1263px;top:496.77px;font-size:16.5px;font-weight:bold;letter-spacing:0.75px">=[Note.NoteText]</div><div style="left:1080px;top:539.22px;width:640px;height:1px;background:#f2f4f9"></div><div style="left:1257.5px;top:516.04px;width:1px;height:23.68px;background:#f2f4f9"></div><div class="t" style="left:1086px;top:521.03px;font-size:15.5px;">WrapText</div><div class="t" style="left:1263px;top:521.03px;font-size:15.5px;">True</div><div style="left:1049px;top:540.22px;width:670px;height:23.68px;background:#f2f4f9"></div><div class="t" style="left:1086px;top:544.13px;font-size:16.5px;font-weight:bold;letter-spacing:0.3px">Behavior</div><svg style="left:1055px;top:547.62px" width="16" height="12" viewBox="0 0 16 12"><path d="M2 3L8 9L14 3" stroke="#333" stroke-width="1.8" fill="none"/></svg><div style="left:1080px;top:586.58px;width:640px;height:1px;background:#f2f4f9"></div><div style="left:1257.5px;top:563.4px;width:1px;height:23.68px;background:#f2f4f9"></div><div class="t" style="left:1086px;top:568.39px;font-size:15.5px;">ConvertHtmlToText</div><div class="t" style="left:1263px;top:568.39px;font-size:15.5px;">False</div><div style="left:1080px;top:610.26px;width:640px;height:1px;background:#f2f4f9"></div><div style="left:1257.5px;top:587.08px;width:1px;height:23.68px;background:#f2f4f9"></div><div class="t" style="left:1086px;top:592.07px;font-size:15.5px;">Localizable</div><div class="t" style="left:1263px;top:592.07px;font-size:15.5px;">True</div><div style="left:1080px;top:633.94px;width:640px;height:1px;background:#f2f4f9"></div><div style="left:1257.5px;top:610.76px;width:1px;height:23.68px;background:#f2f4f9"></div><div class="t" style="left:1086px;top:615.75px;font-size:15.5px;">Multiline</div><div class="t" style="left:1263px;top:615.75px;font-size:15.5px;">True</div><div style="left:1080px;top:657.62px;width:640px;height:1px;background:#f2f4f9"></div><div style="left:1257.5px;top:634.44px;width:1px;height:23.68px;background:#f2f4f9"></div><div class="t" style="left:1086px;top:639.43px;font-size:15.5px;">NavigateMethod</div><div class="t" style="left:1263px;top:639.43px;font-size:15.5px;">Client</div><div style="left:1080px;top:681.3px;width:640px;height:1px;background:#f2f4f9"></div><div style="left:1257.5px;top:658.12px;width:1px;height:23.68px;background:#f2f4f9"></div><div class="t" style="left:1086px;top:663.11px;font-size:15.5px;">NavigateParams</div><div class="t" style="left:1263px;top:663.11px;font-size:15.5px;">(Collection)</div><div style="left:1080px;top:704.98px;width:640px;height:1px;background:#f2f4f9"></div><div style="left:1257.5px;top:681.8px;width:1px;height:23.68px;background:#f2f4f9"></div><div class="t" style="left:1086px;top:686.79px;font-size:15.5px;">NavigateReport</div><div style="left:1080px;top:728.66px;width:640px;height:1px;background:#f2f4f9"></div><div style="left:1257.5px;top:705.48px;width:1px;height:23.68px;background:#f2f4f9"></div><div class="t" style="left:1086px;top:710.47px;font-size:15.5px;">NavigateUrl</div><div style="left:1080px;top:752.34px;width:640px;height:1px;background:#f2f4f9"></div><div style="left:1257.5px;top:729.16px;width:1px;height:23.68px;background:#f2f4f9"></div><div class="t" style="left:1086px;top:734.15px;font-size:15.5px;">ProcessOrder</div><div class="t" style="left:1263px;top:734.15px;font-size:15.5px;">WhileRead</div><div style="left:1080px;top:776.02px;width:640px;height:1px;background:#f2f4f9"></div><div style="left:1257.5px;top:752.84px;width:1px;height:23.68px;background:#f2f4f9"></div><div class="t" style="left:1086px;top:757.83px;font-size:15.5px;">Target</div><div style="left:1080px;top:799.7px;width:640px;height:1px;background:#f2f4f9"></div><div style="left:1257.5px;top:776.52px;width:1px;height:23.68px;background:#f2f4f9"></div><div class="t" style="left:1086px;top:781.51px;font-size:15.5px;">Visible</div><div class="t" style="left:1263px;top:781.51px;font-size:15.5px;">True</div><div style="left:1080px;top:823.38px;width:640px;height:1px;background:#f2f4f9"></div><div style="left:1257.5px;top:800.2px;width:1px;height:23.68px;background:#f2f4f9"></div><div class="t" style="left:1086px;top:805.19px;font-size:15.5px;">VisibleExpr</div><div class="t" style="left:1263px;top:804.61px;font-size:16.5px;font-weight:bold;letter-spacing:0.75px">=[Note.NoteText]&lt;&gt;null And [Note.NoteText]&lt;&gt;''</div><div style="left:1049px;top:824.38px;width:670px;height:23.68px;background:#f2f4f9"></div><div class="t" style="left:1086px;top:828.29px;font-size:16.5px;font-weight:bold;letter-spacing:0.3px">Design</div><svg style="left:1055px;top:831.78px" width="16" height="12" viewBox="0 0 16 12"><path d="M2 3L8 9L14 3" stroke="#333" stroke-width="1.8" fill="none"/></svg><div style="left:1080px;top:870.74px;width:640px;height:1px;background:#f2f4f9"></div><div style="left:1257.5px;top:847.56px;width:1px;height:23.68px;background:#f2f4f9"></div><div class="t" style="left:1086px;top:852.55px;font-size:15.5px;">(Name)</div><div class="t" style="left:1263px;top:851.97px;font-size:16.5px;font-weight:bold;letter-spacing:0.75px">textBox54</div><div style="left:1049px;top:871.74px;width:670px;height:23.68px;background:#f2f4f9"></div><div class="t" style="left:1086px;top:875.65px;font-size:16.5px;font-weight:bold;letter-spacing:0.3px">Layout</div><svg style="left:1055px;top:879.14px" width="16" height="12" viewBox="0 0 16 12"><path d="M2 3L8 9L14 3" stroke="#333" stroke-width="1.8" fill="none"/></svg><div style="left:1080px;top:918.1px;width:640px;height:1px;background:#f2f4f9"></div><div style="left:1257.5px;top:894.92px;width:1px;height:23.68px;background:#f2f4f9"></div><div class="t" style="left:1086px;top:899.91px;font-size:15.5px;">CanGrow</div><div class="t" style="left:1263px;top:899.91px;font-size:15.5px;">False</div><div style="left:1080px;top:941.78px;width:640px;height:1px;background:#f2f4f9"></div><div style="left:1257.5px;top:918.6px;width:1px;height:23.68px;background:#f2f4f9"></div><div class="t" style="left:1086px;top:923.59px;font-size:15.5px;">CanShrink</div><div class="t" style="left:1263px;top:923.59px;font-size:15.5px;">False</div><div style="left:1080px;top:965.46px;width:640px;height:1px;background:#f2f4f9"></div><div style="left:1257.5px;top:942.28px;width:1px;height:23.68px;background:#f2f4f9"></div><div class="t" style="left:1086px;top:947.27px;font-size:15.5px;">CanSplit</div><div class="t" style="left:1263px;top:947.27px;font-size:15.5px;">False</div><div style="left:1080px;top:989.14px;width:640px;height:1px;background:#f2f4f9"></div><div style="left:1257.5px;top:965.96px;width:1px;height:23.68px;background:#f2f4f9"></div><div class="t" style="left:1086px;top:970.95px;font-size:15.5px;">Excel Cell</div><div class="t" style="left:1263px;top:970.95px;font-size:15.5px;">1,1,1,1</div><svg style="left:1057px;top:972.86px" width="12" height="14" viewBox="0 0 12 14"><path d="M3 2L8 7L3 12" stroke="#888" stroke-width="1.6" fill="none"/></svg><div style="left:1080px;top:1012.82px;width:640px;height:1px;background:#f2f4f9"></div><div style="left:1257.5px;top:989.64px;width:1px;height:23.68px;background:#f2f4f9"></div><div class="t" style="left:1086px;top:994.63px;font-size:15.5px;">Excel Visible</div><div class="t" style="left:1263px;top:994.63px;font-size:15.5px;">True</div><div style="left:1080px;top:1036.5px;width:640px;height:1px;background:#f2f4f9"></div><div style="left:1257.5px;top:1013.32px;width:1px;height:23.68px;background:#f2f4f9"></div><div class="t" style="left:1086px;top:1018.31px;font-size:15.5px;">Location</div><div class="t" style="left:1263px;top:1017.73px;font-size:16.5px;font-weight:bold;letter-spacing:0.75px">56px, 88px</div><svg style="left:1057px;top:1020.22px" width="12" height="14" viewBox="0 0 12 14"><path d="M3 2L8 7L3 12" stroke="#888" stroke-width="1.6" fill="none"/></svg><div style="left:1080px;top:1060.18px;width:640px;height:1px;background:#f2f4f9"></div><div style="left:1257.5px;top:1037.0px;width:1px;height:23.68px;background:#f2f4f9"></div><div class="t" style="left:1086px;top:1041.99px;font-size:15.5px;">Size</div><div class="t" style="left:1263px;top:1041.41px;font-size:16.5px;font-weight:bold;letter-spacing:0.75px">304px, 80px</div><svg style="left:1057px;top:1043.9px" width="12" height="14" viewBox="0 0 12 14"><path d="M3 2L8 7L3 12" stroke="#888" stroke-width="1.6" fill="none"/></svg><svg style="left:0;top:0;mix-blend-mode:multiply" width="1718" height="1080" viewBox="0 0 1718 1080"><path d="M1073 728 C1110 729 1150 731 1180 736 C1210 741 1240 743 1258.5 743 L1258.5 720.5 C1275 721 1300 726 1330 728.4 C1345 733 1353 740 1356.6 747 L1356.6 770 L1265 770 C1240 769 1220 768 1209 767 C1195 764 1185 762 1172 760 C1140 756 1100 752 1073 751 Z" fill="#ffff00"/><path d="M1073 795 C1120 792 1160 790 1200 789 C1300 788 1400 789 1470 794 C1540 798 1600 801 1683 805 L1683 828 C1600 827 1520 826 1470 824 C1400 822 1300 820 1200 822 C1150 823 1110 822 1073 818 Z" fill="#ffff00"/></svg><svg style="left:0;top:0" width="1718" height="1080" viewBox="0 0 1718 1080"><path d="M1361.9 722.7 L1360.6 720.5 L1360.1 717.5 L1355.8 716.6 M1359.3 721 C1345 717 1330 713 1313 711.4 C1300 712 1285 715 1271 718.3 C1266 721 1262 723 1256 725.3 C1250 728 1245 735 1242.2 742 C1246 747 1250 749 1255 750.5 C1270 753 1285 756 1299.9 756.8 C1305 756 1308 754.5 1313 754.1 C1325 754.5 1333 755.3 1339.2 755 C1345 753 1350 751 1352.3 748.9 C1355 745 1356 742 1355.8 739.3 L1359.3 722.7" fill="none" stroke="#1414f0" stroke-width="2.6" stroke-linecap="round" stroke-linejoin="round"/></svg></body></html>
